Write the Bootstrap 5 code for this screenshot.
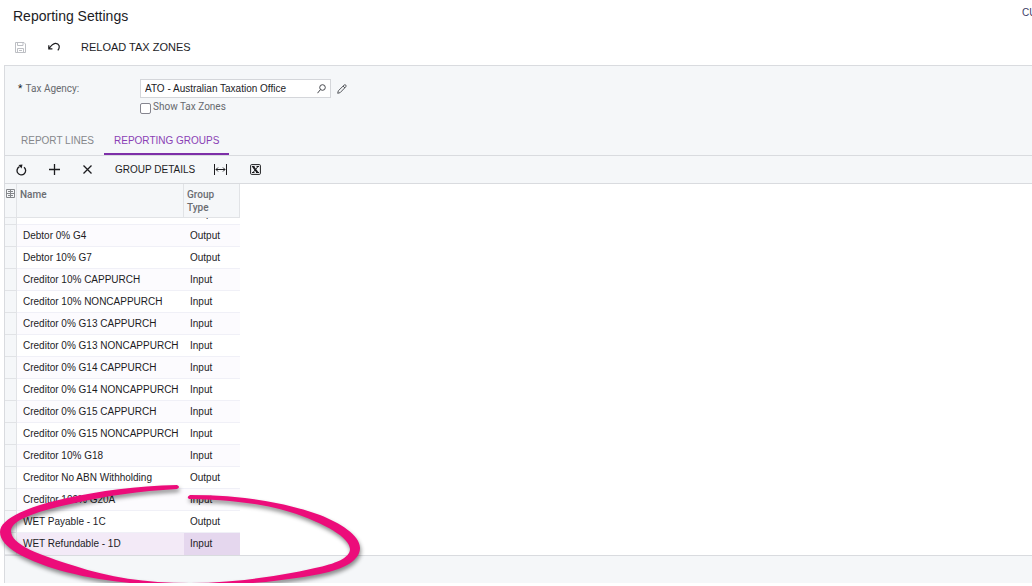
<!DOCTYPE html>
<html lang="en">
<head>
<meta charset="utf-8">
<meta name="viewport" content="width=device-width, initial-scale=1">
<title>Reporting Settings</title>
<link href="https://cdn.jsdelivr.net/npm/bootstrap@5.3.0/dist/css/bootstrap.min.css" rel="stylesheet">
<style>
  body { font-family: "Liberation Sans", Arial, sans-serif; font-size: 10px; line-height: 16px; color: #1c1c1f; background: #fff; overflow-x: hidden; }
  .screen-title { font-size: 14px; line-height: 20px; font-weight: 400; margin: 0; padding: 6px 0 0 13px; }
  .top-link { width: 10px; overflow: hidden; color: #3c4068; white-space: nowrap; text-decoration: none; padding-top: 5px; }
  .tool { border: 0; background: none; padding: 0; color: inherit; display: flex; align-items: center; line-height: 16px; }
  .tool svg, .pick svg { display: block; }
  .tool:disabled { color: #bdbfc4; }
  .main-tools { padding: 13px 0 10px 15px; font-size: 11px; }
  .main-tools .undo { margin: 0 21px 0 22px; }
  .panel { background: #f5f7f9; border: 1px solid #d9dbdf; border-width: 1px 0 0 1px; }
  .form-area { padding: 13px 0 0 13px; }
  .field-label { width: 122px; color: #67696e; font-family: Roboto, sans-serif; line-height: 19px; }
  .field-label span { color: #1c1c1f; padding-right: 1px; }
  .selector { width: 191px; height: 19px; background: #fff; border: 1px solid #d4d6da; }
  .selector input { border: 0; outline: 0; padding: 0 0 0 4px; background: none; color: inherit; min-width: 0; }
  .pick { border: 0; background: none; padding: 0; color: #45474d; }
  .edit { margin-left: 6px; }
  .show-zones { margin: 1px 0 0 122px; gap: 2px; color: #67696e; font-family: Roboto, sans-serif; }
  .show-zones input { appearance: none; width: 11px; height: 11px; margin: 4px 0 0; border: 1px solid #85858f; border-radius: 2px; background: #fff; }
  .tab-strip { margin-top: 13px; padding-left: 6px; }
  .tab-strip .tab-btn { border: 0; background: none; color: #85878b; padding: 5px 10px 4px; line-height: 16px; border-bottom: 2px solid transparent; }
  .tab-strip .tab-btn.active { color: #8a3fb5; border-color: #7d2fa8; }
  .grid-tools { background: #f5f7f9; border: 1px solid #d9dbdf; border-width: 1px 0 1px 1px; height: 29px; padding-left: 11px; gap: 22px; }
  .grid-tools .wide-actions { gap: 19px; }
  .grid-area { border-left: 1px solid #d9dbdf; }
  .groups { border-collapse: separate; border-spacing: 0; width: 235px; table-layout: fixed; }
  .groups th { background: #f5f7f9; color: #6b6d72; font-family: Roboto, sans-serif; font-weight: 500; line-height: 13px; vertical-align: top; height: 34px; padding: 4px 3px 3px; border-right: 1px solid #e1e3e6; border-bottom: 1px solid #e1e3e6; }
  .groups td { height: 22px; line-height: 21px; padding: 0 6px; border-bottom: 1px solid #f0f0f7; white-space: nowrap; }
  .groups td.sel { background: #f5f7f9; border-right: 1px solid #e1e3e6; border-bottom-color: #e1e3e6; padding: 0; }
  .groups th.sel { padding: 5px 1px; color: #85878b; }
  .groups tr:nth-child(even) td:not(.sel) { background: #fcfbfe; }
  .groups tr.cut td { height: 7px; }
  .cut-text { height: 6px; overflow: hidden; display: flex; align-items: flex-end; }
  .groups tbody tr.current td:not(.sel) { background: #f3eaf7; border-color: #f3eaf7; }
  .groups tbody tr.current td.kind { background: #e5d7ee; border-color: #e5d7ee; }
  .grid-foot { height: 28px; background: #f5f7f9; border: 1px solid #d9dbdf; border-width: 1px 0 0 1px; }
  .marker { position: absolute; left: -4px; bottom: -3px; width: 370px; height: 108px; pointer-events: none; filter: drop-shadow(1px 3px 2px rgba(0,0,0,.45)); }
</style>
</head>
<body>
<header class="d-flex justify-content-between align-items-start">
  <h1 class="screen-title">Reporting Settings</h1>
  <a href="#" class="top-link">CU</a>
</header>
<div class="d-flex align-items-center main-tools" role="toolbar" aria-label="Screen">
  <button class="tool" disabled aria-label="Save"><svg width="11" height="11" viewBox="0 0 11 11" fill="none" stroke="currentColor"><path d="M.5 .5h8.500l1.500 1.500v8.500H.5zM2.500 .5v3h5.500v-3M2.500 10.500v-4h6v4M4 8.500h3"/></svg></button>
  <button class="tool undo" aria-label="Cancel"><svg width="12" height="10" viewBox="0 0 12 10" fill="none" stroke="currentColor" stroke-width="1.200"><path d="M.8 3.200v3.600h3.600M1 6.600C3 3.800 4.800 1.600 7.300 1.400c3.800-.2 5.200 3.600 2.500 7"/></svg></button>
  <button class="tool">RELOAD TAX ZONES</button>
</div>
<main class="ms-1 position-relative">
  <section class="panel">
    <div class="form-area">
      <div class="d-flex align-items-center">
        <label for="agency" class="field-label"><span>*</span> Tax Agency:</label>
        <div class="selector d-flex align-items-center">
          <input id="agency" type="text" class="flex-grow-1" value="ATO - Australian Taxation Office">
          <button class="pick me-1" aria-label="Look up"><svg width="9" height="10" viewBox="0 0 9 10" fill="none" stroke="currentColor"><circle cx="5.500" cy="3.500" r="2.800"/><path d="M3.500 5.500L.5 9.200"/></svg></button>
        </div>
        <button class="pick edit" aria-label="Edit"><svg width="10" height="10" viewBox="0 0 10 10" fill="none" stroke="currentColor" stroke-width=".9"><path d="M.7 9.300l.6-2.500L7 1.200q1-1 1.800-.1t-.1 1.800L3.200 8.600zM6 2l2 2"/></svg></button>
      </div>
      <div class="d-flex align-items-start show-zones">
        <input type="checkbox" id="zones"><label for="zones">Show Tax Zones</label>
      </div>
    </div>
    <div class="tab-strip d-flex" role="tablist">
      <button class="tab-btn" role="tab" aria-selected="false">REPORT LINES</button>
      <button class="tab-btn active" role="tab" aria-selected="true">REPORTING GROUPS</button>
    </div>
  </section>
  <div class="grid-tools d-flex align-items-center" role="toolbar" aria-label="Groups">
    <button class="tool" aria-label="Refresh"><svg width="11" height="12" viewBox="0 0 11 12" fill="none" stroke="currentColor" stroke-width="1.300"><path d="M8 3.200A4.300 4.300 0 1 1 3.500 2.700"/><path d="M2.500 1L6.500 .6 5.600 4.600z" fill="currentColor" stroke="none"/></svg></button>
    <button class="tool" aria-label="Add"><svg width="11" height="11" viewBox="0 0 11 11" fill="none" stroke="currentColor" stroke-width="1.300"><path d="M5.500 0v11M0 5.500h11"/></svg></button>
    <button class="tool" aria-label="Delete"><svg width="11" height="9" viewBox="-1 0 11 9" fill="none" stroke="currentColor" stroke-width="1.300"><path d="M.5 .5l8 8M8.500 .5l-8 8"/></svg></button>
    <div class="wide-actions d-flex align-items-center">
      <button class="tool">GROUP DETAILS</button>
      <button class="tool" aria-label="Fit columns"><svg width="13" height="11" viewBox="0 0 13 11" fill="none" stroke="currentColor"><path d="M.5 0v11M12.500 0v11M2 5.500h9M4 3.500l-2 2 2 2M9 3.500l2 2-2 2"/></svg></button>
      <button class="tool ms-1" aria-label="Export to Excel"><svg width="11" height="11" viewBox="0 0 11 11" fill="none" stroke="currentColor"><rect x=".6" y=".6" width="9.800" height="9.800" rx="1"/><path d="M3 2.500l4.500 6" stroke-width="2"/><path d="M8 2.500l-5 6M2 2.500h2.500M6.500 2.500h2.500M2 8.500h2.500M6 8.500h3"/></svg></button>
    </div>
  </div>
  <div class="grid-area">
    <table class="groups">
      <colgroup><col style="width:12px"><col style="width:167px"><col></colgroup>
      <thead><tr>
        <th class="sel" aria-label="Row settings"><svg class="d-block" width="9" height="9" viewBox="0 0 9 9" fill="none" stroke="currentColor"><path d="M.5 .5h8v8h-8zM.5 4.500h8M4.500 .5v8M2 2.500h5M2 6.500h5"/></svg></th>
        <th>Name</th><th>Group Type</th></tr></thead>
      <tbody>
        <tr class="cut"><td class="sel"></td><td></td><td class="kind"><div class="cut-text">Output</div></td></tr>
        <tr><td class="sel"></td><td>Debtor 0% G4</td><td class="kind">Output</td></tr>
        <tr><td class="sel"></td><td>Debtor 10% G7</td><td class="kind">Output</td></tr>
        <tr><td class="sel"></td><td>Creditor 10% CAPPURCH</td><td class="kind">Input</td></tr>
        <tr><td class="sel"></td><td>Creditor 10% NONCAPPURCH</td><td class="kind">Input</td></tr>
        <tr><td class="sel"></td><td>Creditor 0% G13 CAPPURCH</td><td class="kind">Input</td></tr>
        <tr><td class="sel"></td><td>Creditor 0% G13 NONCAPPURCH</td><td class="kind">Input</td></tr>
        <tr><td class="sel"></td><td>Creditor 0% G14 CAPPURCH</td><td class="kind">Input</td></tr>
        <tr><td class="sel"></td><td>Creditor 0% G14 NONCAPPURCH</td><td class="kind">Input</td></tr>
        <tr><td class="sel"></td><td>Creditor 0% G15 CAPPURCH</td><td class="kind">Input</td></tr>
        <tr><td class="sel"></td><td>Creditor 0% G15 NONCAPPURCH</td><td class="kind">Input</td></tr>
        <tr><td class="sel"></td><td>Creditor 10% G18</td><td class="kind">Input</td></tr>
        <tr><td class="sel"></td><td>Creditor No ABN Withholding</td><td class="kind">Output</td></tr>
        <tr><td class="sel"></td><td>Creditor 100% G20A</td><td class="kind">Input</td></tr>
        <tr><td class="sel"></td><td>WET Payable - 1C</td><td class="kind">Output</td></tr>
        <tr class="current"><td class="sel"></td><td>WET Refundable - 1D</td><td class="kind">Input</td></tr>
      </tbody>
    </table>
  </div>
  <div class="grid-foot"></div>
  <svg class="marker" viewBox="0 0 370 108" aria-hidden="true"><path fill="#ec0c7a" d="M177 7C135 8 100 13 67 20C30 28 0 40 0 54C0 70 28 82 52 90C90 102 140 108 190 108C235 108 285 103 320 96C345 91 360 82 360 70C360 57 340 45 320 37C285 24 240 17 190 17Q186 19 189 21C235 22 262 26 290 34C325 45 350 60 350 71C350 80 335 86 315 90C280 98 235 105 190 105C145 105 108 99 75 88C40 77 11 67 11 53C11 41 42 32 75 25C105 18 140 13 177 11Q181 9 177 7z"/></svg>
</main>
<script src="https://cdn.jsdelivr.net/npm/bootstrap@5.3.0/dist/js/bootstrap.bundle.min.js"></script>
</body>
</html>
